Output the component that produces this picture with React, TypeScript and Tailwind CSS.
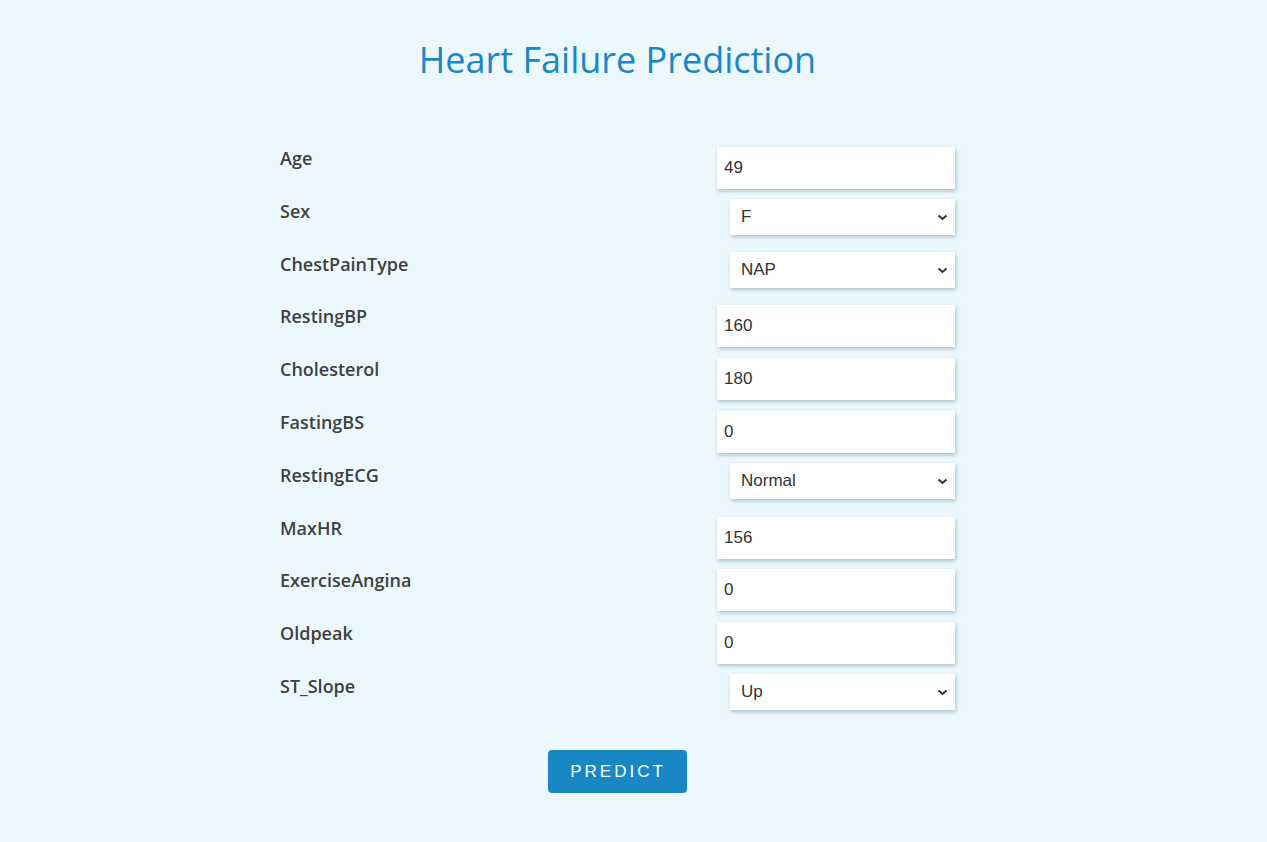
import { useState } from "react";

type Field =
  | { name: string; kind: "input"; value: string }
  | { name: string; kind: "select"; value: string; options: string[] };

const fields: Field[] = [
  { name: "Age", kind: "input", value: "49" },
  { name: "Sex", kind: "select", value: "F", options: ["M", "F"] },
  { name: "ChestPainType", kind: "select", value: "NAP", options: ["ATA", "NAP", "ASY", "TA"] },
  { name: "RestingBP", kind: "input", value: "160" },
  { name: "Cholesterol", kind: "input", value: "180" },
  { name: "FastingBS", kind: "input", value: "0" },
  { name: "RestingECG", kind: "select", value: "Normal", options: ["Normal", "ST", "LVH"] },
  { name: "MaxHR", kind: "input", value: "156" },
  { name: "ExerciseAngina", kind: "input", value: "0" },
  { name: "Oldpeak", kind: "input", value: "0" },
  { name: "ST_Slope", kind: "select", value: "Up", options: ["Up", "Flat", "Down"] },
];

function Row({ field }: { field: Field }) {
  const [value, setValue] = useState(field.value);

  return (
    <div className="flex justify-between items-start h-[42px]">
      <label className="-mt-px text-[18px] leading-6 font-semibold text-[#404040]">{field.name}</label>
      {field.kind === "input" ? (
        <input
          value={value}
          onChange={(e) => setValue(e.target.value)}
          className="w-[238px] h-[42px] bg-white px-[7px] text-[17px] text-[#333] outline-none shadow-[1px_2px_4px_rgba(60,90,100,0.35)]"
          style={{ fontFamily: '"Liberation Sans", Arial, sans-serif' }}
        />
      ) : (
        <div className="relative -mt-px">
          <select
            value={value}
            onChange={(e) => setValue(e.target.value)}
            className="appearance-none w-[225px] h-[36px] bg-white pl-[11px] text-[17px] text-[#333] outline-none shadow-[1px_2px_4px_rgba(60,90,100,0.35)]"
            style={{ fontFamily: '"Liberation Sans", Arial, sans-serif' }}
          >
            {field.options.map((o) => (
              <option key={o}>{o}</option>
            ))}
          </select>
          <svg
            className="absolute right-[7px] top-[15px] pointer-events-none"
            width="11"
            height="7"
            viewBox="0 0 11 7"
          >
            <path d="M1.5 1.5 L5.5 5 L9.5 1.5" fill="none" stroke="#333" strokeWidth="2" />
          </svg>
        </div>
      )}
    </div>
  );
}

export default function App() {
  return (
    <div
      className="min-h-screen bg-[#ebf9ff] flex flex-col items-center pr-[32px]"
      style={{ fontFamily: '"Open Sans", sans-serif' }}
    >
      <h1 className="mt-[36px] text-[36px] leading-[48px] text-[#1c86c6]">Heart Failure Prediction</h1>

      <form className="w-[675px] mt-[63px] flex flex-col gap-[10.8px]">
        {fields.map((f) => (
          <Row key={f.name} field={f} />
        ))}
      </form>

      <button
        className="mt-[33px] w-[139px] h-[43px] rounded-[4px] bg-[#1a87c5] text-white text-[17px] tracking-[3px] pl-px"
        style={{ fontFamily: '"Liberation Sans", Arial, sans-serif' }}
      >
        PREDICT
      </button>
    </div>
  );
}
